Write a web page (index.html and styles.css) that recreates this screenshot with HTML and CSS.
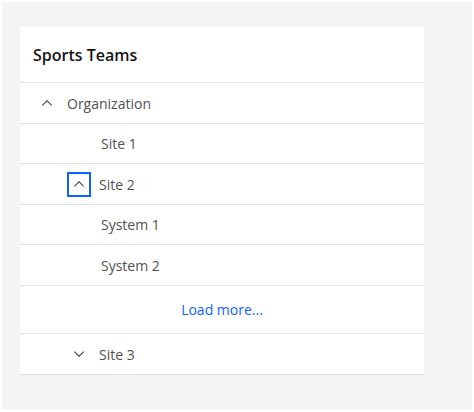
FILE: index.html
```html
<!DOCTYPE html>
<html lang="en">
<head>
<meta charset="utf-8">
<title>Sports Teams</title>
<link rel="stylesheet" href="styles.css">
</head>
<body>
<div class="stage">
  <div class="card">
    <div class="card-header">Sports Teams</div>
    <ul class="tree">
      <li class="node level-1">
        <span class="toggle"><svg viewBox="0 0 16 16" width="16" height="16"><path d="M8 5 13 10 12.3 10.7 8 6.4 3.7 10.7 3 10z"/></svg></span>
        <span class="label">Organization</span>
      </li>
      <li class="node leaf">
        <span class="label">Site 1</span>
      </li>
      <li class="node level-2">
        <span class="toggle focused"><svg viewBox="0 0 16 16" width="16" height="16"><path d="M8 5 13 10 12.3 10.7 8 6.4 3.7 10.7 3 10z"/></svg></span>
        <span class="label">Site 2</span>
      </li>
      <li class="node leaf">
        <span class="label">System 1</span>
      </li>
      <li class="node leaf">
        <span class="label">System 2</span>
      </li>
      <li class="node load-more">
        <a class="link" href="#">Load more...</a>
      </li>
      <li class="node level-2">
        <span class="toggle"><svg viewBox="0 0 16 16" width="16" height="16"><path d="M8 11 3 6 3.7 5.3 8 9.6 12.3 5.3 13 6z"/></svg></span>
        <span class="label">Site 3</span>
      </li>
    </ul>
  </div>
</div>
</body>
</html>
```

FILE: styles.css
```css
* { box-sizing: border-box; }

html, body {
  margin: 0;
  padding: 0;
  background: #ffffff;
}

body {
  font-family: "Open Sans", "Noto Sans", Arial, sans-serif;
  color: #525252;
}

.stage {
  margin: 2px 2px 0 2px;
  height: 407px;
  background: #f4f4f4;
  padding: 25px 48px 0 18px;
}

.card {
  background: #ffffff;
  width: 404px;
}

.card-header {
  height: 56px;
  display: flex;
  align-items: center;
  padding: 1px 0 0 13px;
  font-size: 16px;
  font-weight: 600;
  color: #161616;
  border-bottom: 1px solid #e0e0e0;
}

.tree {
  list-style: none;
  margin: 0;
  padding: 0;
}

.node {
  height: 40.5px;
  display: flex;
  align-items: center;
  gap: 8px;
  padding-top: 1px;
  font-size: 14px;
  border-bottom: 1px solid #e0e0e0;
}

.level-1 { padding-left: 15px; }
.level-2 { padding-left: 47px; }
.leaf { padding-left: 81px; }

.load-more {
  height: 48.5px;
  justify-content: center;
}

.toggle {
  width: 24px;
  height: 24px;
  display: flex;
  align-items: center;
  justify-content: center;
}

.toggle svg {
  fill: #393939;
}

.toggle.focused {
  height: 25px;
  border: 2px solid #0f62fe;
}

.link {
  color: #0f62fe;
  text-decoration: none;
}
```
